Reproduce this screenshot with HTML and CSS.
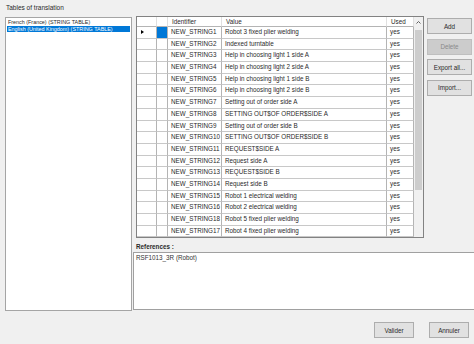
FILE: index.html
```html
<!DOCTYPE html>
<html>
<head>
<meta charset="utf-8">
<link rel="stylesheet" href="styles.css">
</head>
<body>
<div class="win">
  <div class="title">Tables of translation</div>
  <div class="main">
    <div class="list">
      <div class="item">French (France) (STRING TABLE)</div>
      <div class="item sel">English (United Kingdom) (STRING TABLE)</div>
    </div>
    <div class="right">
      <div class="top">
        <div class="grid">
          <div class="table">
            <div class="row head">
              <div class="c rh"></div><div class="c sc"></div><div class="c">Identifier</div><div class="c">Value</div><div class="c">Used</div>
            </div>
            <div class="row"><div class="c rh"><span class="tri"></span></div><div class="c sc on"></div><div class="c">NEW_STRING1</div><div class="c">Robot 3 fixed plier welding</div><div class="c">yes</div></div>
            <div class="row"><div class="c rh"></div><div class="c sc"></div><div class="c">NEW_STRING2</div><div class="c">Indexed turntable</div><div class="c">yes</div></div>
            <div class="row"><div class="c rh"></div><div class="c sc"></div><div class="c">NEW_STRING3</div><div class="c">Help in choosing light 1 side A</div><div class="c">yes</div></div>
            <div class="row"><div class="c rh"></div><div class="c sc"></div><div class="c">NEW_STRING4</div><div class="c">Help in choosing light 2 side A</div><div class="c">yes</div></div>
            <div class="row"><div class="c rh"></div><div class="c sc"></div><div class="c">NEW_STRING5</div><div class="c">Help in choosing light 1 side B</div><div class="c">yes</div></div>
            <div class="row"><div class="c rh"></div><div class="c sc"></div><div class="c">NEW_STRING6</div><div class="c">Help in choosing light 2 side B</div><div class="c">yes</div></div>
            <div class="row"><div class="c rh"></div><div class="c sc"></div><div class="c">NEW_STRING7</div><div class="c">Setting out of order side A</div><div class="c">yes</div></div>
            <div class="row"><div class="c rh"></div><div class="c sc"></div><div class="c">NEW_STRING8</div><div class="c">SETTING OUT$OF ORDER$SIDE A</div><div class="c">yes</div></div>
            <div class="row"><div class="c rh"></div><div class="c sc"></div><div class="c">NEW_STRING9</div><div class="c">Setting out of order side B</div><div class="c">yes</div></div>
            <div class="row"><div class="c rh"></div><div class="c sc"></div><div class="c">NEW_STRING10</div><div class="c">SETTING OUT$OF ORDER$SIDE B</div><div class="c">yes</div></div>
            <div class="row"><div class="c rh"></div><div class="c sc"></div><div class="c">NEW_STRING11</div><div class="c">REQUEST$SIDE A</div><div class="c">yes</div></div>
            <div class="row"><div class="c rh"></div><div class="c sc"></div><div class="c">NEW_STRING12</div><div class="c">Request side A</div><div class="c">yes</div></div>
            <div class="row"><div class="c rh"></div><div class="c sc"></div><div class="c">NEW_STRING13</div><div class="c">REQUEST$SIDE B</div><div class="c">yes</div></div>
            <div class="row"><div class="c rh"></div><div class="c sc"></div><div class="c">NEW_STRING14</div><div class="c">Request side B</div><div class="c">yes</div></div>
            <div class="row"><div class="c rh"></div><div class="c sc"></div><div class="c">NEW_STRING15</div><div class="c">Robot 1 electrical welding</div><div class="c">yes</div></div>
            <div class="row"><div class="c rh"></div><div class="c sc"></div><div class="c">NEW_STRING16</div><div class="c">Robot 2 electrical welding</div><div class="c">yes</div></div>
            <div class="row"><div class="c rh"></div><div class="c sc"></div><div class="c">NEW_STRING18</div><div class="c">Robot 5 fixed plier welding</div><div class="c">yes</div></div>
            <div class="row"><div class="c rh"></div><div class="c sc"></div><div class="c">NEW_STRING17</div><div class="c">Robot 4 fixed plier welding</div><div class="c">yes</div></div>
          </div>
          <div class="vscroll">
            <svg class="arr" width="9" height="9" viewBox="0 0 9 9"><path d="M2.5 5.5 L4.5 3.5 L6.5 5.5" fill="none" stroke="#606060" stroke-width="1"/></svg>
            <div class="track"><div class="thumb"></div></div>
            <svg class="arr" width="9" height="9" viewBox="0 0 9 9"><path d="M2.5 3.5 L4.5 5.5 L6.5 3.5" fill="none" stroke="#606060" stroke-width="1"/></svg>
          </div>
        </div>
        <div class="btns">
          <div class="btn">Add</div>
          <div class="btn dis">Delete</div>
          <div class="btn">Export all...</div>
          <div class="btn">Import...</div>
        </div>
      </div>
      <div class="reflabel">References :</div>
      <div class="refbox">RSF1013_3R (Robot)</div>
    </div>
  </div>
  <div class="footer">
    <div class="btn fbtn">Valider</div>
    <div class="btn fbtn">Annuler</div>
  </div>
</div>
</body>
</html>
```
FILE: styles.css
```css
html, body {
  margin: 0;
  padding: 0;
}
body {
  background: #f0f0f0;
  font-family: "Liberation Sans", Arial, sans-serif;
  font-size: 6.3px;
  color: #2a2a2a;
}
.win {
  width: 474px;
  height: 344px;
  overflow: hidden;
}
.title {
  padding: 4px 0 0 6px;
  height: 12px;
  line-height: 8px;
  box-sizing: border-box;
  font-size: 6.5px;
}
.main {
  display: flex;
  margin-top: 4px;
}
.list {
  margin: 1px 0 0 5px;
  width: 127px;
  height: 294px;
  box-sizing: border-box;
  background: #fff;
  border: 1px solid #a5a5a5;
  padding: 1px 1px;
  font-size: 5.4px;
}
.item {
  height: 6.5px;
  line-height: 6.5px;
  padding-left: 1px;
  white-space: nowrap;
}
.item.sel {
  background: #0078d7;
  color: #fff;
}
.right {
  margin-left: 1px;
  flex: 1;
  display: flex;
  flex-direction: column;
}
.top {
  display: flex;
}
.grid {
  margin-left: 3px;
  width: 288px;
  height: 222px;
  box-sizing: border-box;
  border: 1px solid #828282;
  background: #fff;
  display: flex;
  overflow: hidden;
}
.table {
  width: 277px;
}
.row {
  display: grid;
  grid-template-columns: 20px 11px 54px 165px 27px;
  height: 11.7px;
}
.row.head {
  height: 10px;
}
.c {
  border-right: 1px solid #b4b4b4;
  border-bottom: 1px solid #c8c8c8;
  box-sizing: border-box;
  padding-left: 3px;
  line-height: 10.7px;
  white-space: nowrap;
  overflow: hidden;
}
.head .c {
  line-height: 9px;
  padding-left: 4px;
  border-right-color: #e0e0e0;
  border-bottom-color: #b4b4b4;
}
.c.rh {
  padding: 0;
  display: flex;
  align-items: center;
  padding-left: 4px;
}
.c.sc {
  padding: 0;
}
.c.on {
  background: #0078d7;
}
.tri {
  width: 0;
  height: 0;
  border-left: 3px solid #000;
  border-top: 2.5px solid transparent;
  border-bottom: 2.5px solid transparent;
}
.vscroll {
  width: 9px;
  background: #f0f0f0;
  display: flex;
  flex-direction: column;
}
.arr {
  display: block;
  flex: none;
  margin-top: 1px;
}
.track {
  flex: 1;
  padding: 3px 0 43px 0;
}
.thumb {
  margin: 0 1px;
  height: 160px;
  background: #cdcdcd;
}
.btns {
  margin-left: 3px;
  padding-top: 2px;
  display: flex;
  flex-direction: column;
  gap: 4.5px;
}
.btn {
  width: 45px;
  height: 16px;
  box-sizing: border-box;
  background: #e1e1e1;
  border: 1px solid #adadad;
  display: flex;
  align-items: center;
  justify-content: center;
}
.btn.dis {
  background: #cccccc;
  border-color: #bfbfbf;
  color: #8a8a8a;
}
.reflabel {
  margin-left: 3px;
  height: 14px;
  line-height: 17px;
  font-weight: bold;
}
.refbox {
  height: 58px;
  box-sizing: border-box;
  background: #fff;
  border: 1px solid #a0a0a0;
  border-right: none;
  padding: 1px 2px;
  line-height: 7px;
  color: #333;
}
.footer {
  display: flex;
  justify-content: flex-end;
  gap: 15px;
  padding: 11px 5px 0 0;
}
.fbtn {
  width: 40px;
}
```
